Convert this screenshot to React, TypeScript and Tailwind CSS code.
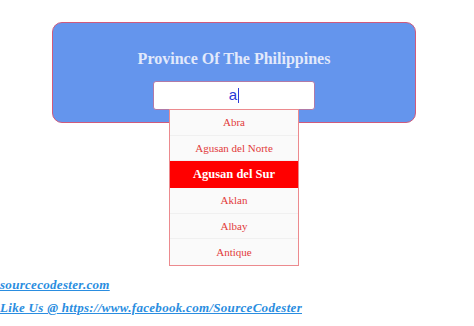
const provinces = ["Abra", "Agusan del Norte", "Agusan del Sur", "Aklan", "Albay", "Antique"];
const active = "Agusan del Sur";

export default function App() {
  return (
    <div className="min-h-[326px] bg-white pt-[22px]">
      <div className="w-[468px]">
        {/* Search panel */}
        <div className="mx-auto flex h-[101px] w-[364px] flex-col items-center rounded-[10px] border border-[#cf5a7c] bg-[#6495ed] pt-[25px]">
          <h1 className="font-['Liberation_Serif',serif] text-[16px] font-bold leading-[22px] text-[#e2e9fb]">
            Province Of The Philippines
          </h1>
          <div className="relative mt-[11px]">
            <div className="flex h-[29px] w-[162px] items-center justify-center rounded-[3px] border border-[#b07aa8] bg-white font-['Liberation_Sans',sans-serif] text-[15px] text-[#2a3bd8]">
              <span>a</span>
              <span className="ml-[1px] h-[15px] w-px bg-[#2a3bd8]" />
            </div>

            {/* Suggestions */}
            <ul className="absolute left-[16px] top-[28px] z-10 w-[130px] border border-[#ec8a8e] bg-[#fafafa] font-['Liberation_Serif',serif]">
              {provinces.map((p) =>
                p === active ? (
                  <li
                    key={p}
                    className="flex h-[27px] items-center justify-center bg-[#ff0000] text-[12.5px] font-bold text-white"
                  >
                    {p}
                  </li>
                ) : (
                  <li
                    key={p}
                    className="flex h-[25.6px] items-center justify-center border-b border-[#f0f0f0] text-[11px] text-[#e23a3a] last:border-b-0"
                  >
                    {p}
                  </li>
                )
              )}
            </ul>
          </div>
        </div>
      </div>

      {/* Footer links */}
      <div className="mt-[153px] flex flex-col gap-[5px] font-['Liberation_Serif',serif] text-[13px] font-bold italic leading-[18px] tracking-[0.3px] text-[#2a8de0]">
        <a href="#" className="w-fit underline">
          sourcecodester.com
        </a>
        <a href="#" className="w-fit underline">
          Like Us @ https://www.facebook.com/SourceCodester
        </a>
      </div>
    </div>
  );
}
